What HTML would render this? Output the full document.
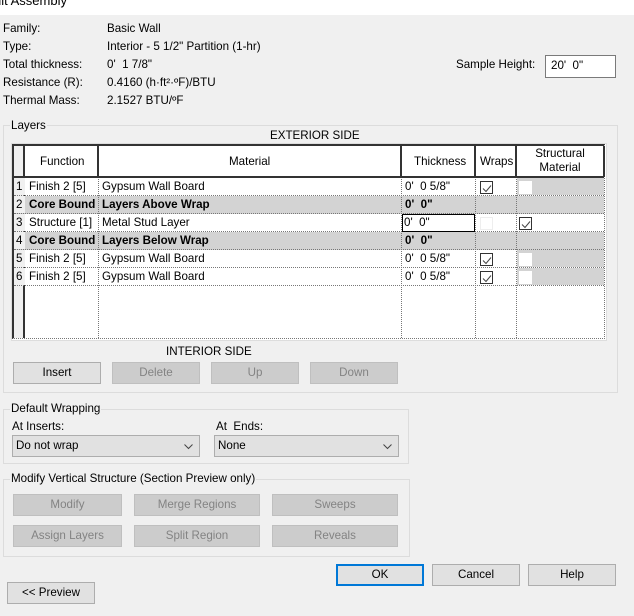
<!DOCTYPE html>
<html><head><meta charset="utf-8"><style>
*{box-sizing:border-box;margin:0;padding:0}
body{width:634px;height:616px;background:#f0f0f0;font-family:"Liberation Sans",sans-serif;font-size:11.6px;color:#000;position:relative;overflow:hidden}
.a{position:absolute;white-space:nowrap}
.grp{position:absolute;border:1px solid #dcdcdc}
.gl{position:absolute;background:#f0f0f0;padding:0 1px;line-height:13px}
.btn{position:absolute;height:22px;background:#e1e1e1;border:1px solid #adadad;text-align:center;line-height:20px}
.dis{background:#cccccc;border-color:#bfbfbf;color:#838383}
.sel{position:absolute;height:22px;background:#e1e1e1;border:1px solid #adadad;line-height:20px;padding-left:3px}
.sel svg{position:absolute;right:6px;top:8px}
.row{position:absolute;left:14px;width:590px;height:18px;border-bottom:1px dotted #777;line-height:17px}
.c{position:absolute;top:0;height:17px;padding-left:3px;overflow:hidden;white-space:nowrap}
.n{left:0;width:11px;background:#f0f0f0;padding-left:2px;font-weight:normal}
.cb{position:absolute;top:3px;width:13px;height:13px;background:#fff;border:1px solid #333}
.cb.e{border-color:#fff}
.cb.f{border-color:#eee}
.vd{position:absolute;top:179px;height:159px;border-left:1px dotted #777}
</style></head><body>
<div class="a" style="left:0;top:0;width:634px;height:15px;background:#fff"></div>
<div class="a" style="left:-6px;top:-7px;font-size:13px">dit Assembly</div>

<div class="a" style="left:3px;top:22px">Family:</div>
<div class="a" style="left:3px;top:40px">Type:</div>
<div class="a" style="left:3px;top:58px">Total thickness:</div>
<div class="a" style="left:3px;top:76px">Resistance (R):</div>
<div class="a" style="left:3px;top:94px">Thermal Mass:</div>
<div class="a" style="left:107px;top:22px">Basic Wall</div>
<div class="a" style="left:107px;top:40px">Interior - 5 1/2" Partition (1-hr)</div>
<div class="a" style="left:107px;top:58px">0'&nbsp; 1 7/8"</div>
<div class="a" style="left:107px;top:76px">0.4160 (h·ft²·ºF)/BTU</div>
<div class="a" style="left:107px;top:94px">2.1527 BTU/ºF</div>
<div class="a" style="left:456px;top:58px">Sample Height:</div>
<div class="a" style="left:545px;top:55px;width:71px;height:23px;background:#fff;border:1px solid #7a7a7a;padding:3px 0 0 5px">20'&nbsp; 0"</div>

<div class="grp" style="left:3px;top:125px;width:615px;height:268px"></div>
<div class="gl" style="left:10px;top:119px">Layers</div>
<div class="a" style="left:270px;top:129px">EXTERIOR SIDE</div>

<div class="a" style="left:11px;top:143px;width:596px;height:198px;background:#fff;border:1px solid #ddd"></div>
<div class="a" style="left:12px;top:144px;width:593px;height:195px;background:#fff;border-left:2px solid #333;border-top:2px solid #333;border-right:1px dotted #777;border-bottom:1px dotted #777"></div>
<div class="a" style="left:14px;top:146px;width:11px;height:192px;background:#f0f0f0;border-right:2px solid #333"></div>
<div class="a" style="left:14px;top:176px;width:590px;height:2px;background:#333"></div>
<div class="a" style="left:97px;top:146px;width:2px;height:31px;background:#333"></div>
<div class="a" style="left:400px;top:146px;width:2px;height:31px;background:#333"></div>
<div class="a" style="left:474px;top:146px;width:2px;height:31px;background:#333"></div>
<div class="a" style="left:515px;top:146px;width:2px;height:31px;background:#333"></div>
<div class="a" style="left:603px;top:146px;width:2px;height:31px;background:#333"></div>
<div class="a" style="left:40px;top:155px">Function</div>
<div class="a" style="left:229px;top:155px">Material</div>
<div class="a" style="left:414px;top:155px">Thickness</div>
<div class="a" style="left:480px;top:155px">Wraps</div>
<div class="a" style="left:517px;top:147px;width:86px;text-align:center;line-height:14px">Structural<br>Material</div>

<div class="row" style="top:178px"><div class="c n">1</div><div class="c" style="left:12px">Finish 2 [5]</div><div class="c" style="left:85px">Gypsum Wall Board</div><div class="c" style="left:388px">0'&nbsp; 0 5/8"</div><div class="cb" style="left:466px"><svg width="11" height="11"><path d="M2 5.5l3 3 5-6" stroke="#444" fill="none"/></svg></div><div class="c" style="left:503px;width:87px;background:#d3d3d3"></div><div class="cb e" style="left:505px"></div></div>
<div class="row" style="top:196px;background:#d3d3d3;font-weight:bold"><div class="c n">2</div><div class="c" style="left:12px">Core Bound</div><div class="c" style="left:85px">Layers Above Wrap</div><div class="c" style="left:388px">0'&nbsp; 0"</div></div>
<div class="row" style="top:214px"><div class="c n">3</div><div class="c" style="left:12px">Structure [1]</div><div class="c" style="left:85px">Metal Stud Layer</div><div class="c" style="left:388px;width:73px;height:18px;top:0;border:1px solid #000;padding-left:1px;line-height:15px">0'&nbsp; 0"</div><div class="cb f" style="left:466px"></div><div class="cb" style="left:505px"><svg width="11" height="11"><path d="M2 5.5l3 3 5-6" stroke="#444" fill="none"/></svg></div></div>
<div class="row" style="top:232px;background:#d3d3d3;font-weight:bold"><div class="c n">4</div><div class="c" style="left:12px">Core Bound</div><div class="c" style="left:85px">Layers Below Wrap</div><div class="c" style="left:388px">0'&nbsp; 0"</div></div>
<div class="row" style="top:250px"><div class="c n">5</div><div class="c" style="left:12px">Finish 2 [5]</div><div class="c" style="left:85px">Gypsum Wall Board</div><div class="c" style="left:388px">0'&nbsp; 0 5/8"</div><div class="cb" style="left:466px"><svg width="11" height="11"><path d="M2 5.5l3 3 5-6" stroke="#444" fill="none"/></svg></div><div class="c" style="left:503px;width:87px;background:#d3d3d3"></div><div class="cb e" style="left:505px"></div></div>
<div class="row" style="top:268px"><div class="c n">6</div><div class="c" style="left:12px">Finish 2 [5]</div><div class="c" style="left:85px">Gypsum Wall Board</div><div class="c" style="left:388px">0'&nbsp; 0 5/8"</div><div class="cb" style="left:466px"><svg width="11" height="11"><path d="M2 5.5l3 3 5-6" stroke="#444" fill="none"/></svg></div><div class="c" style="left:503px;width:87px;background:#d3d3d3"></div><div class="cb e" style="left:505px"></div></div>
<div class="vd" style="left:98px"></div><div class="vd" style="left:401px"></div><div class="vd" style="left:475px"></div><div class="vd" style="left:516px"></div>

<div class="a" style="left:166px;top:345px">INTERIOR SIDE</div>
<div class="btn" style="left:13px;top:362px;width:88px">Insert</div>
<div class="btn dis" style="left:112px;top:362px;width:88px">Delete</div>
<div class="btn dis" style="left:211px;top:362px;width:88px">Up</div>
<div class="btn dis" style="left:310px;top:362px;width:88px">Down</div>

<div class="grp" style="left:3px;top:409px;width:406px;height:55px"></div>
<div class="gl" style="left:10px;top:402px">Default Wrapping</div>
<div class="a" style="left:12px;top:420px">At Inserts:</div>
<div class="a" style="left:216px;top:420px">At&nbsp; Ends:</div>
<div class="sel" style="left:12px;top:435px;width:188px">Do not wrap<svg width="9" height="6"><path d="M0.5 0.5l4 4 4-4" stroke="#444" fill="none"/></svg></div>
<div class="sel" style="left:214px;top:435px;width:185px">None<svg width="9" height="6"><path d="M0.5 0.5l4 4 4-4" stroke="#444" fill="none"/></svg></div>

<div class="grp" style="left:3px;top:479px;width:407px;height:78px"></div>
<div class="gl" style="left:10px;top:472px">Modify Vertical Structure (Section Preview only)</div>
<div class="btn dis" style="left:13px;top:494px;width:109px">Modify</div>
<div class="btn dis" style="left:134px;top:494px;width:126px">Merge Regions</div>
<div class="btn dis" style="left:272px;top:494px;width:126px">Sweeps</div>
<div class="btn dis" style="left:13px;top:525px;width:109px">Assign Layers</div>
<div class="btn dis" style="left:134px;top:525px;width:126px">Split Region</div>
<div class="btn dis" style="left:272px;top:525px;width:126px">Reveals</div>

<div class="btn" style="left:336px;top:564px;width:88px;border:2px solid #0078d7;line-height:18px">OK</div>
<div class="btn" style="left:432px;top:564px;width:88px">Cancel</div>
<div class="btn" style="left:528px;top:564px;width:88px">Help</div>
<div class="btn" style="left:7px;top:582px;width:88px">&lt;&lt; Preview</div>
</body></html>
